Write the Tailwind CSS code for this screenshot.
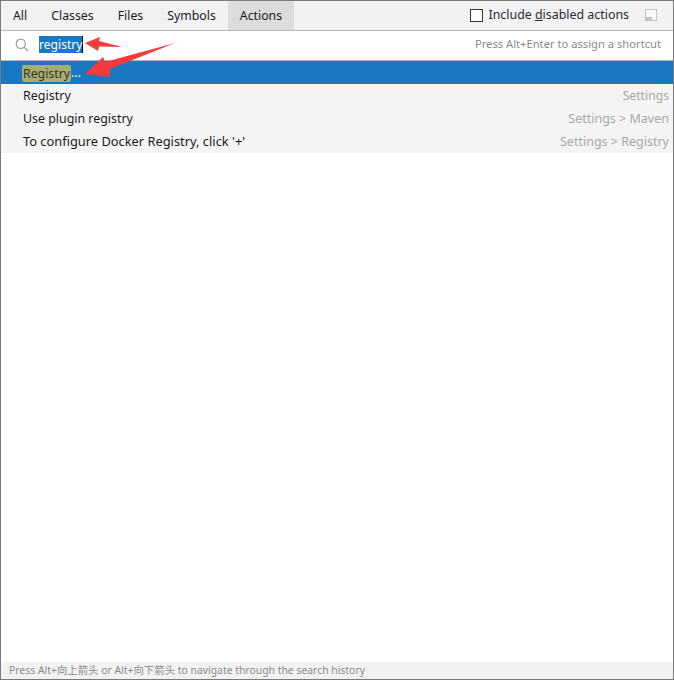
<!doctype html>
<html lang="en">
  <head>
    <meta charset="UTF-8" />
    <title>Search Everywhere</title>
    <script src="https://cdn.jsdelivr.net/npm/@tailwindcss/browser@4"></script>
  </head>
  <body class="bg-white">
    <div class="relative w-[674px] h-[680px] flex flex-col border border-[#7a7a7a] bg-white text-[12.5px] text-[#1a1a1a] font-['Noto_Sans','Noto_Sans_CJK_SC',sans-serif] overflow-hidden">
      <!-- Tabs -->
      <div class="h-[30px] flex items-center bg-[#f2f2f2] border-b border-[#b4b4b4] text-[12.3px] shrink-0">
        <div class="h-full flex items-center pt-px px-3">All</div>
        <div class="h-full flex items-center pt-px px-3">Classes</div>
        <div class="h-full flex items-center pt-px px-3">Files</div>
        <div class="h-full flex items-center pt-px px-3">Symbols</div>
        <div class="h-full flex items-center pt-px px-3 bg-[#dcdcdc]">Actions</div>
        <div class="ml-auto flex items-center">
          <span class="w-[13px] h-[13px] border border-[#333] bg-white mr-[5px]"></span>
          <span class="text-[12.4px] text-[#1f2a36]">Include <u>d</u>isabled actions</span>
          <svg class="ml-[16px] mr-4" width="12" height="12" viewBox="0 0 12 12">
            <rect x="0.5" y="0.5" width="11" height="11" fill="#f8f8f8" stroke="#c4c4c4" />
            <rect x="1" y="8" width="6" height="3" fill="#c4c4c4" />
          </svg>
        </div>
      </div>

      <!-- Search field -->
      <div class="h-[30px] flex items-center pb-[2px] bg-white border-b border-[#b4b4b4] shrink-0">
        <svg class="ml-[14px] mr-[10px]" width="14" height="14" viewBox="0 0 14 14" fill="none" stroke="#9a9a9a" stroke-width="1.2">
          <circle cx="5.8" cy="5.8" r="4.6" />
          <path d="M9.2 9.2 13 13" />
        </svg>
        <span class="bg-[#1a78c2] text-[12.1px] text-white leading-[17px] h-[17px] border-r border-black">registry</span>
        <span class="ml-auto mr-3 text-[11.2px] text-[#8a8a8a]">Press Alt+Enter to assign a shortcut</span>
      </div>

      <!-- Results -->
      <div class="flex flex-col bg-[#f4f4f4] shrink-0">
        <div class="h-[23px] flex items-center pt-px pl-[21px] pr-1 bg-[#1a78c2] text-white">
          <span class="bg-[#a9ad6e] text-[12.3px] text-[#333] rounded-[2px] leading-[17px] px-px">Registry</span><span>...</span>
        </div>
        <div class="h-[23px] flex items-center justify-between pt-px pl-[22px] pr-1">
          <span>Registry</span><span class="text-[12.2px] text-[#a8a8a8]">Settings</span>
        </div>
        <div class="h-[23px] flex items-center justify-between pt-px pl-[22px] pr-1">
          <span class="text-[12.4px]">Use plugin registry</span><span class="text-[#a8a8a8]">Settings &gt; Maven</span>
        </div>
        <div class="h-[23px] flex items-center justify-between pt-px pl-[22px] pr-1">
          <span class="text-[12.85px]">To configure Docker Registry, click '+'</span><span class="text-[#a8a8a8]">Settings &gt; Registry</span>
        </div>
      </div>

      <div class="flex-1"></div>

      <!-- Footer hint -->
      <div class="h-[17px] flex items-center pl-2 bg-[#f2f2f2] text-[10.4px] text-[#8a8a8a] shrink-0">
        Press Alt+向上箭头 or Alt+向下箭头 to navigate through the search history
      </div>

      <!-- Red annotation arrows -->
      <svg class="absolute -left-px -top-px" width="200" height="90" viewBox="0 0 200 90" fill="#f53b3b">
        <path d="M85 43 100 37 99 41 122 47 99 46.5 98 51Z" />
        <path d="M85 74 103 57 105 62 175 43 110 69 110 77Z" />
      </svg>
    </div>
  </body>
</html>
